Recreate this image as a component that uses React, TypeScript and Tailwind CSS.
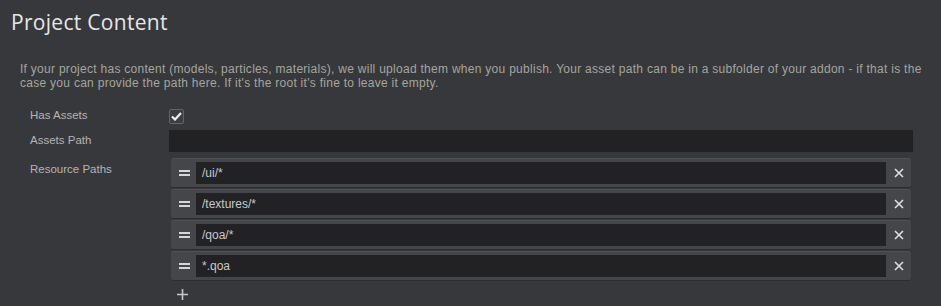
import React from 'react';

const paths = ['/ui/*', '/textures/*', '/qoa/*', '*.qoa'];

const Label: React.FC<{ text: string; className?: string }> = ({ text, className }) => (
  <div className={`w-[139px] shrink-0 text-[11.5px] text-[#b4b4b4] ${className ?? ''}`}>{text}</div>
);

const PathRow: React.FC<{ value: string }> = ({ value }) => (
  <div className="flex h-[30px] items-center rounded-[3px] border-t border-[#505155] border-b border-b-[#2c2d30] bg-[#45464a]">
    <div className="flex w-[25px] shrink-0 justify-center pl-[2px]">
      <svg width="11" height="6" viewBox="0 0 11 6">
        <rect x="0" y="0" width="11" height="2" fill="#d6d6d6" />
        <rect x="0" y="4" width="11" height="2" fill="#d6d6d6" />
      </svg>
    </div>
    <div className="flex h-[22px] flex-1 items-center bg-[#222225] pl-[6px] text-[12px] text-[#c9c9c9]">
      {value}
    </div>
    <div className="flex w-[25px] shrink-0 justify-center">
      <svg width="10" height="10" viewBox="0 0 10 10">
        <path d="M1 1L9 9M9 1L1 9" stroke="#e0e0e0" strokeWidth="1.6" />
      </svg>
    </div>
  </div>
);

export default function App() {
  return (
    <div
      className="h-[306px] w-[941px] overflow-hidden bg-[#37383c]"
      style={{ fontFamily: '"Liberation Sans", Arial, sans-serif' }}
    >
      <h1
        className="pl-[11px] pt-[8px] text-[21px] leading-[28px] font-medium tracking-[0.3px] text-[#e6e6e6]"
        style={{ fontFamily: '"Open Sans", sans-serif' }}
      >
        Project Content
      </h1>

      <p className="mt-[26px] pl-[20px] pr-[10px] text-[12px] leading-[14px] tracking-[0.28px] text-[#a5a69c]">
        If your project has content (models, particles, materials), we will upload them when you publish. Your asset path can be in a subfolder of your addon - if that is the case you can provide the path here. If it's the root it's fine to leave it empty.
      </p>

      <div className="mt-[18px] flex h-[16px] items-center pl-[30px]">
        <Label text="Has Assets" />
        <div className="flex h-[15px] w-[15px] items-center justify-center rounded-[2px] border border-[#626366] bg-[#3d3e42]">
          <svg width="11" height="9" viewBox="0 0 11 9">
            <path d="M1 4.5L4 7.5L10 1" stroke="#eeeeee" strokeWidth="2.2" fill="none" />
          </svg>
        </div>
      </div>

      <div className="mt-[6px] flex h-[22px] items-center pl-[30px]">
        <Label text="Assets Path" />
        <div className="h-[22px] w-[744px] bg-[#222225]" />
      </div>

      <div className="mt-[6px] flex pl-[30px]">
        <Label text="Resource Paths" className="pt-[3px]" />
        <div className="ml-[2px] w-[740px]">
          <div className="flex flex-col gap-[1px]">
            {paths.map((p) => (
              <PathRow key={p} value={p} />
            ))}
          </div>
          <div className="mt-[8px] pl-[6px]">
            <svg width="11" height="11" viewBox="0 0 11 11">
              <path d="M5.5 0V11M0 5.5H11" stroke="#c8c8c8" strokeWidth="1.6" />
            </svg>
          </div>
        </div>
      </div>
    </div>
  );
}
